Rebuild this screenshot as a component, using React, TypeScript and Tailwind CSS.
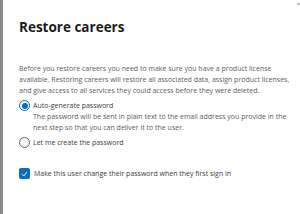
import React from "react";

export default function App() {
  return (
    <div className="w-[300px] h-[214px] bg-white flex overflow-hidden relative" style={{ fontFamily: '"Open Sans", "Noto Sans", sans-serif' }}>
      <div className="w-[3px] h-full bg-[#8a8a8a] shrink-0" />
      <div className="flex-1 pl-[16px] pr-2 pt-[16px] flex flex-col">
        <h1 className="text-[13.5px] leading-[22px] font-bold text-[#1b1b1b]">Restore careers</h1>
        <p className="mt-[25px] text-[7px] leading-[11px] text-[#5c5c5c]">
          Before you restore careers you need to make sure you have a product license available. Restoring careers will restore all associated data, assign product licenses, and give access to all services they could access before they were deleted.
        </p>
        <div className="mt-[4px] flex items-center gap-[3px]">
          <span className="w-[11px] h-[11px] rounded-full border border-[#0f6cbd] flex items-center justify-center shrink-0">
            <span className="w-[6px] h-[6px] rounded-full bg-[#0f6cbd]" />
          </span>
          <span className="text-[7px] leading-[11px] text-[#3b3b3b]">Auto-generate password</span>
        </div>
        <p className="pl-[14px] text-[7px] leading-[11px] text-[#5c5c5c]">
          The password will be sent in plain text to the email address you provide in the next step so that you can deliver it to the user.
        </p>
        <div className="mt-[4px] flex items-center gap-[3px]">
          <span className="w-[11px] h-[11px] rounded-full border border-[#666] shrink-0" />
          <span className="text-[7px] leading-[11px] text-[#3b3b3b]">Let me create the password</span>
        </div>
        <div className="mt-[20px] flex items-center gap-[4px]">
          <span className="w-[11px] h-[11px] rounded-[2px] bg-[#0f6cbd] flex items-center justify-center shrink-0">
            <svg width="7" height="6" viewBox="0 0 7 6" fill="none">
              <path d="M1 3.2 L2.8 5 L6 1" stroke="white" strokeWidth="0.9" />
            </svg>
          </span>
          <span className="text-[7px] leading-[11px] text-[#3b3b3b]">Make this user change their password when they first sign in</span>
        </div>
      </div>
      <div className="absolute right-0 top-[1px] text-[6px] leading-[6px] text-[#666]">×</div>
    </div>
  );
}
